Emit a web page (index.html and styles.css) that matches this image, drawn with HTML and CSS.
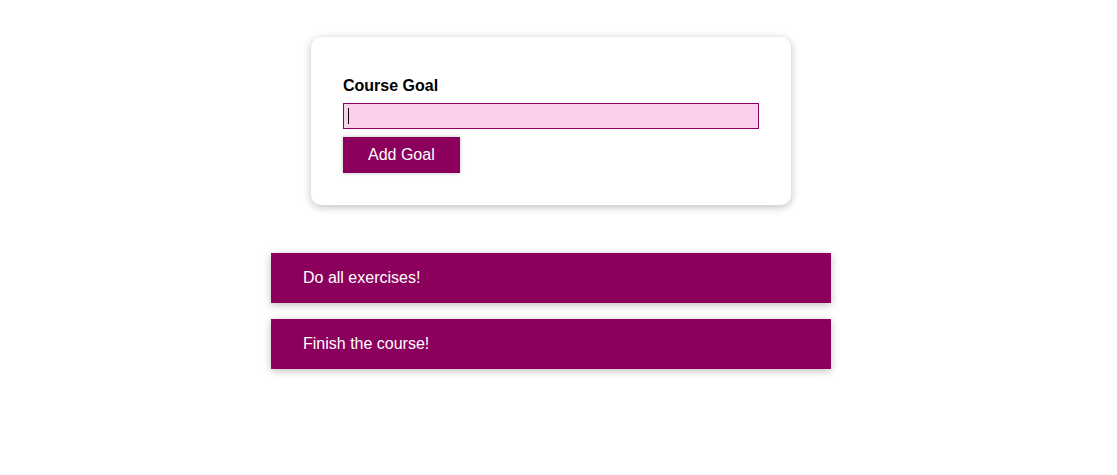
FILE: index.html
```html
<!DOCTYPE html>
<html lang="en">
<head>
<meta charset="utf-8">
<title>Course Goals</title>
<link rel="stylesheet" href="styles.css">
</head>
<body>
<div class="app">
  <section class="goal-form">
    <form>
      <div class="form-control">
        <label for="goal">Course Goal</label>
        <div class="input-wrap">
          <input type="text" id="goal">
          <span class="caret"></span>
        </div>
      </div>
      <button type="button" class="button">Add Goal</button>
    </form>
  </section>
  <section class="goals">
    <ul class="goal-list">
      <li class="goal-item">Do all exercises!</li>
      <li class="goal-item">Finish the course!</li>
    </ul>
  </section>
</div>
</body>
</html>
```

FILE: styles.css
```css
* {
  box-sizing: border-box;
}

html {
  font-family: "Liberation Sans", Arial, sans-serif;
  font-size: 16px;
}

body {
  margin: 0;
  background: #ffffff;
}

.app {
  padding-top: 37px;
  padding-right: 15px;
}

.goal-form {
  width: 30rem;
  max-width: 90%;
  margin: 0 auto 3rem;
  padding: 2rem;
  border-radius: 10px;
  background: #ffffff;
  box-shadow: 0 2px 8px rgba(0, 0, 0, 0.26);
}

.goal-form form {
  margin: 0;
}

.form-control {
  margin: 0.5rem 0;
}

.form-control label {
  display: block;
  font-weight: bold;
  margin-bottom: 0.5rem;
  color: #000;
  line-height: 18px;
}

.input-wrap {
  position: relative;
}

.form-control input {
  display: block;
  width: 100%;
  font: inherit;
  line-height: 1.5rem;
  height: 26px;
  padding: 0 0.25rem;
  margin: 0;
  border: 1px solid #8b005d;
  background: #fad0ec;
  outline: none;
  caret-color: transparent;
}

.caret {
  position: absolute;
  left: 5px;
  top: 5px;
  width: 1px;
  height: 16px;
  background: #000;
}

.button {
  font: inherit;
  line-height: 18px;
  padding: 0.5rem 1.5rem;
  margin: 0;
  border: 1px solid #8b005d;
  color: #ffffff;
  background: #8b005d;
  box-shadow: 0 0 4px rgba(0, 0, 0, 0.26);
  cursor: pointer;
}

.goals {
  width: 35rem;
  max-width: 90%;
  margin: 3rem auto;
}

.goal-list {
  list-style: none;
  margin: 0;
  padding: 0;
}

.goal-item {
  margin: 1rem 0;
  background: #8b005d;
  color: #ffffff;
  padding: 1rem 2rem;
  line-height: 18px;
  box-shadow: 0 2px 8px rgba(0, 0, 0, 0.26);
}
```
